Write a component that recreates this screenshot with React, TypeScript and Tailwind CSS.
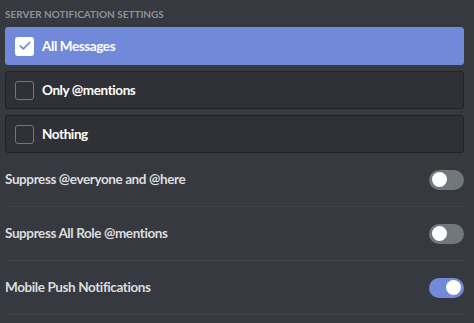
import { Check } from 'lucide-react';

const options = [
  { label: 'All Messages', checked: true },
  { label: 'Only @mentions', checked: false },
  { label: 'Nothing', checked: false },
];

const toggles = [
  { label: 'Suppress @everyone and @here', on: false },
  { label: 'Suppress All Role @mentions', on: false },
  { label: 'Mobile Push Notifications', on: true },
];

function Toggle({ on }: { on: boolean }) {
  return (
    <div
      className={`flex h-[20px] w-[35px] items-center rounded-full px-[3px] ${
        on ? 'justify-end bg-[#7289da]' : 'justify-start bg-[#72767d]'
      }`}
    >
      <div className="h-[15px] w-[15px] rounded-full bg-white" />
    </div>
  );
}

export default function App() {
  return (
    <div className="min-h-[323px] w-[474px] bg-[#36393f] pl-[5px] pr-[10px] font-['Lato',sans-serif]">
      <div className="flex h-[27px] items-center pt-[1px] text-[10px] font-bold uppercase text-[#8e9297]">
        Server Notification Settings
      </div>

      <div className="flex flex-col gap-[6px]">
        {options.map((o) => (
          <div
            key={o.label}
            className={`flex h-[38px] items-center gap-[8px] rounded-[3px] border pl-[9px] ${
              o.checked ? 'border-[#7289da] bg-[#7289da]' : 'border-[#202225] bg-[#2f3136]'
            }`}
          >
            {o.checked ? (
              <div className="flex h-[19px] w-[19px] items-center justify-center rounded-[3px] bg-white">
                <Check size={14} strokeWidth={3} className="text-[#7289da]" />
              </div>
            ) : (
              <div className="h-[19px] w-[19px] rounded-[3px] border-[1.5px] border-[#72767d]" />
            )}
            <span className="text-[13.5px] font-bold tracking-[-0.4px] text-white">{o.label}</span>
          </div>
        ))}
      </div>

      <div>
        {toggles.map((t) => (
          <div key={t.label}>
            <div className="flex h-[53px] items-center justify-between">
              <span className="text-[13.5px] font-bold tracking-[-0.4px] text-[#dcddde]">{t.label}</span>
              <Toggle on={t.on} />
            </div>
            <div className="ml-[3px] h-px bg-[#40434a]" />
          </div>
        ))}
      </div>
    </div>
  );
}
